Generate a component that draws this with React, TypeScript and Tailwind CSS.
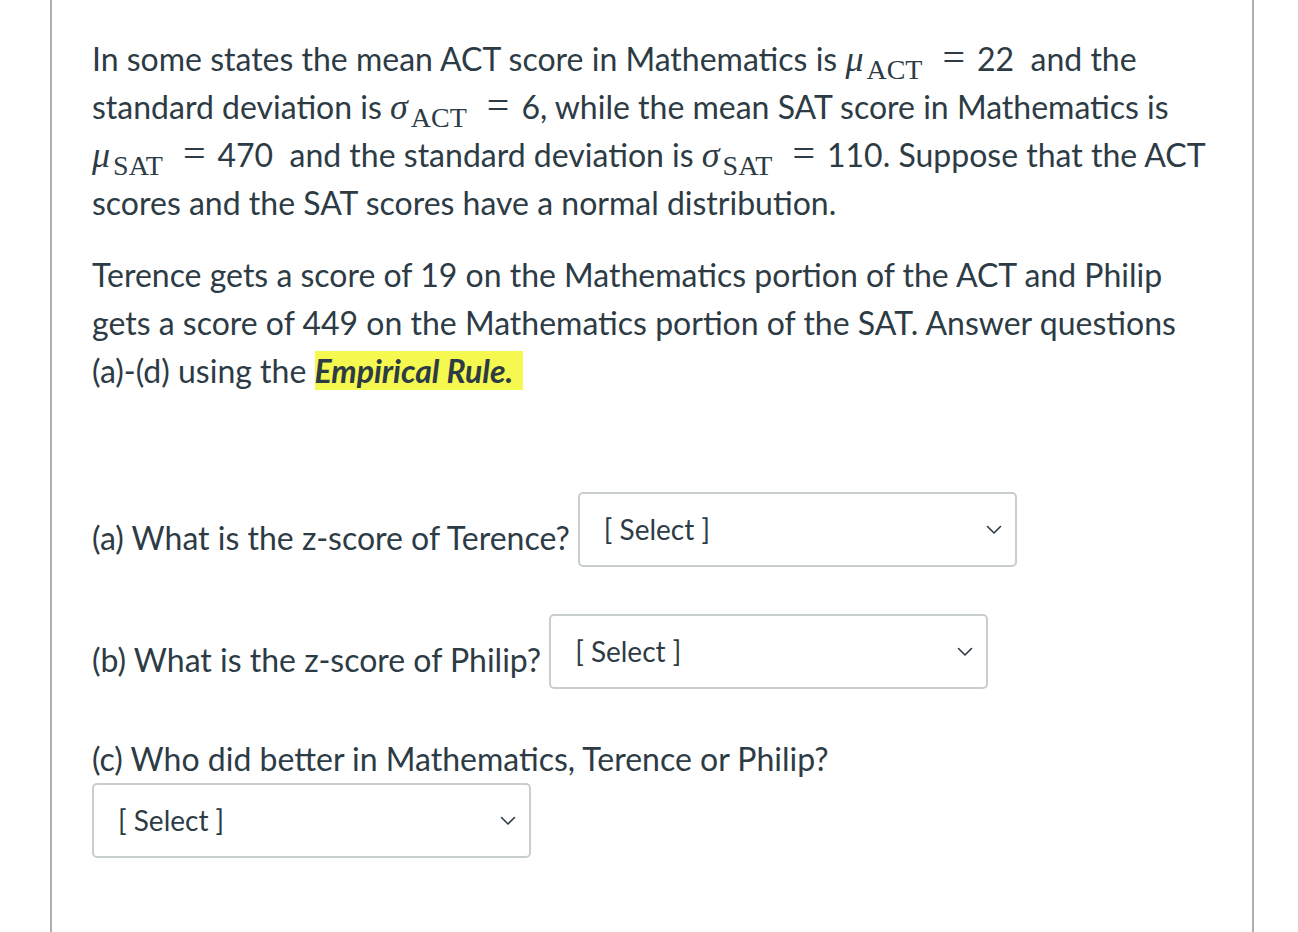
import React from "react";

const serif = '"Liberation Serif", "DejaVu Serif", serif';

const M = ({ sym, sub }: { sym: string; sub: string }) => (
  <span className="whitespace-nowrap leading-[0]" style={{ fontFamily: serif }}>
    <span className="mr-[3px] italic text-[36px] leading-[0]">{sym}</span>
    <span className="relative top-[0.28em] text-[28px] leading-[0]">{sub}</span>
    <span className="ml-[20px] mr-[12px] text-[40px] leading-[0]">=</span>
  </span>
);

const Chevron = () => (
  <svg width="16" height="10" viewBox="0 0 16 10" fill="none" className="shrink-0">
    <path d="M1.5 1.5 L8 8 L14.5 1.5" stroke="#2d3b45" strokeWidth="1.6" strokeLinecap="round" strokeLinejoin="round" />
  </svg>
);

const Select = ({ w }: { w: string }) => (
  <div className={`flex h-[75px] items-center justify-between rounded-[5px] border-2 border-[#c8cdd0] bg-white pl-[24px] pr-[13px] ${w}`}>
    <span className="-mt-[2px] text-[28px] leading-[36px] text-[#2d3b45]">[ Select ]</span>
    <Chevron />
  </div>
);

export default function App() {
  return (
    <div className="min-h-[932px] bg-white" style={{ fontFamily: 'Lato, "Open Sans", sans-serif' }}>
      <div className="mx-[50px] min-h-[932px] w-[1204px] border-x-2 border-[#aeaeae] pl-[40px] pr-[40px] pt-[35px] text-[32px] leading-[48px] text-[#2d3b45]">
        <p>
          In some states the mean ACT score in Mathematics is <M sym="μ" sub="ACT" />22&nbsp; and the standard deviation is <M sym="σ" sub="ACT" />6, while the mean SAT score in Mathematics is <M sym="μ" sub="SAT" />470&nbsp; and the standard deviation is <M sym="σ" sub="SAT" />110. Suppose that the ACT scores and the SAT scores have a normal distribution.
        </p>
        <p className="mt-[24px]">
          Terence gets a score of 19 on the Mathematics portion of the ACT and Philip gets a score of 449 on the Mathematics portion of the SAT. Answer questions (a)-(d) using the{" "}
          <span className="bg-[#f5f84f] pr-[10px] font-bold italic">Empirical Rule.</span>
        </p>
        <div className="mt-[97px] flex items-end gap-[8px]">
          <span className="mb-[5px]">(a) What is the z-score of Terence?</span>
          <Select w="w-[439px]" />
        </div>
        <div className="mt-[47px] flex items-end gap-[8px]">
          <span className="mb-[5px]">(b) What is the z-score of Philip?</span>
          <Select w="w-[439px]" />
        </div>
        <p className="mt-[46px]">(c) Who did better in Mathematics, Terence or Philip?</p>
        <Select w="w-[439px]" />
      </div>
    </div>
  );
}
